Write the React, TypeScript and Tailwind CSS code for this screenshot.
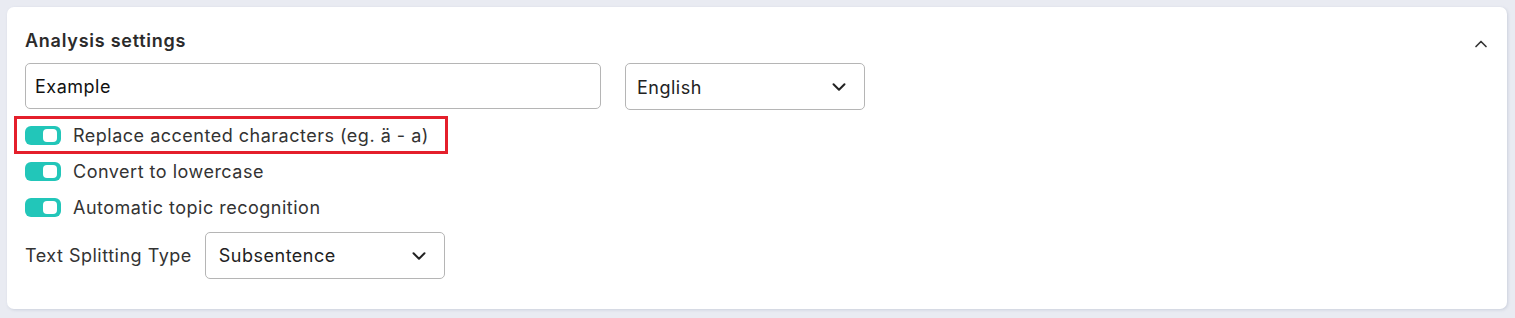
import { ChevronDown, ChevronUp } from 'lucide-react';

const Toggle = () => (
  <div className="w-[36px] h-[19px] rounded-[6px] bg-[#22c6b9] flex items-center justify-end pr-[4px]">
    <div className="w-[14px] h-[13px] rounded-[4px] bg-white" />
  </div>
);

const options = [
  { label: 'Replace accented characters (eg. ä - a)', marked: true },
  { label: 'Convert to lowercase', marked: false },
  { label: 'Automatic topic recognition', marked: false },
];

export default function App() {
  return (
    <div
      className="w-[1515px] h-[318px] bg-[#e9ebf2] pt-[7px] pl-[7px] tracking-[0.5px]"
      style={{ fontFamily: 'Inter, "Liberation Sans", sans-serif' }}
    >
      <div className="relative w-[1500px] h-[302px] bg-white rounded-[7px] shadow-[1px_1px_3px_rgba(120,130,160,0.25)] pl-[18px] pt-[22px] text-[#333]">
        <button className="absolute right-[16px] top-[27px] text-[#333]">
          <ChevronUp className="w-[20px] h-[20px]" strokeWidth={2} />
        </button>
        <h2 className="text-[18px] font-semibold leading-[24px] tracking-[0.75px] text-[#2b2b2b]">Analysis settings</h2>

        <div className="flex gap-[24px] mt-[10px]">
          <div className="w-[576px] h-[46px] border border-[#b5b5b5] rounded-[5px] flex items-center px-[9px] pt-[1px] text-[18px] text-[#111]">
            Example
          </div>
          <div className="w-[240px] h-[47px] border border-[#b5b5b5] rounded-[5px] flex items-center justify-between pl-[11px] pr-[14px] pt-[1px] text-[18px] text-[#222]">
            English
            <ChevronDown className="w-[22px] h-[22px]" strokeWidth={2.2} />
          </div>
        </div>

        <div className="mt-[7px] flex flex-col">
          {options.map((o) => (
            <div key={o.label} className="relative h-[36px] flex items-center gap-[12px]">
              <Toggle />
              <span className="text-[18px]">{o.label}</span>
              {o.marked && (
                <span className="absolute left-[-11px] top-[-1px] w-[434px] h-[38px] border-[3px] border-[#e41f2b]" />
              )}
            </div>
          ))}
        </div>

        <div className="mt-[7px] flex items-center gap-[13px]">
          <span className="text-[18px]">Text Splitting Type</span>
          <div className="w-[240px] h-[47px] border border-[#b5b5b5] rounded-[5px] flex items-center justify-between pl-[13px] pr-[14px] text-[18px] text-[#222]">
            Subsentence
            <ChevronDown className="w-[22px] h-[22px]" strokeWidth={2.2} />
          </div>
        </div>
      </div>
    </div>
  );
}
